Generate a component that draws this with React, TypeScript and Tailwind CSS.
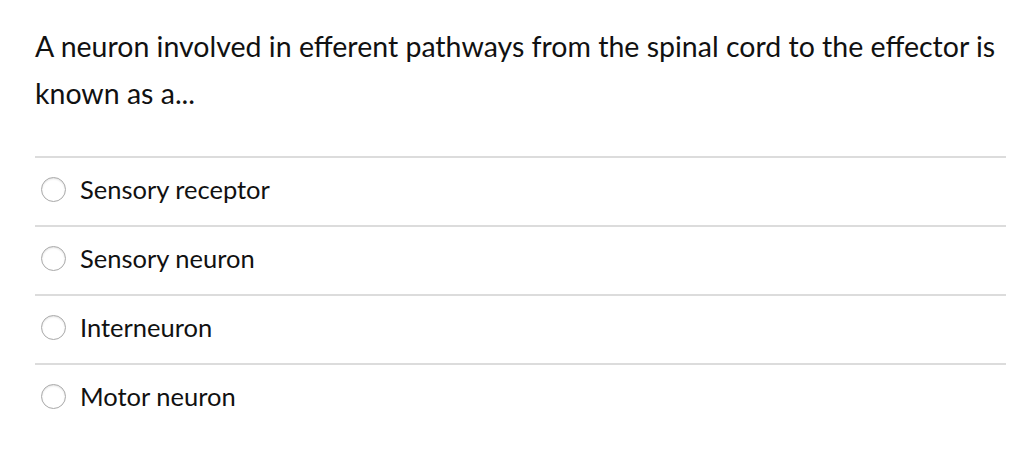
import React from 'react';

const options = ['Sensory receptor', 'Sensory neuron', 'Interneuron', 'Motor neuron'];

function Radio() {
  return (
    <span className="w-[25px] h-[25px] rounded-full border border-[#a9a9a9] bg-white shadow-[inset_0_1px_2px_rgba(0,0,0,0.12)] shrink-0" />
  );
}

export default function App() {
  return (
    <div className="w-[1024px] h-[467px] bg-white text-[#111] pl-[35px] pr-[8px] pt-[23px] font-['Lato','Liberation_Sans',sans-serif]">
      <p className="text-[28.5px] leading-[47px]">
        A neuron involved in efferent pathways from the spinal cord to the effector is known as a...
      </p>
      <div className="mt-[39px] w-[971px]">
        {options.map((o) => (
          <div key={o} className="h-[69px] border-t-2 border-[#dcdcdc] flex items-center gap-[14px] pl-[6px] pb-[5px]">
            <Radio />
            <span className="text-[25.5px]">{o}</span>
          </div>
        ))}
      </div>
    </div>
  );
}
